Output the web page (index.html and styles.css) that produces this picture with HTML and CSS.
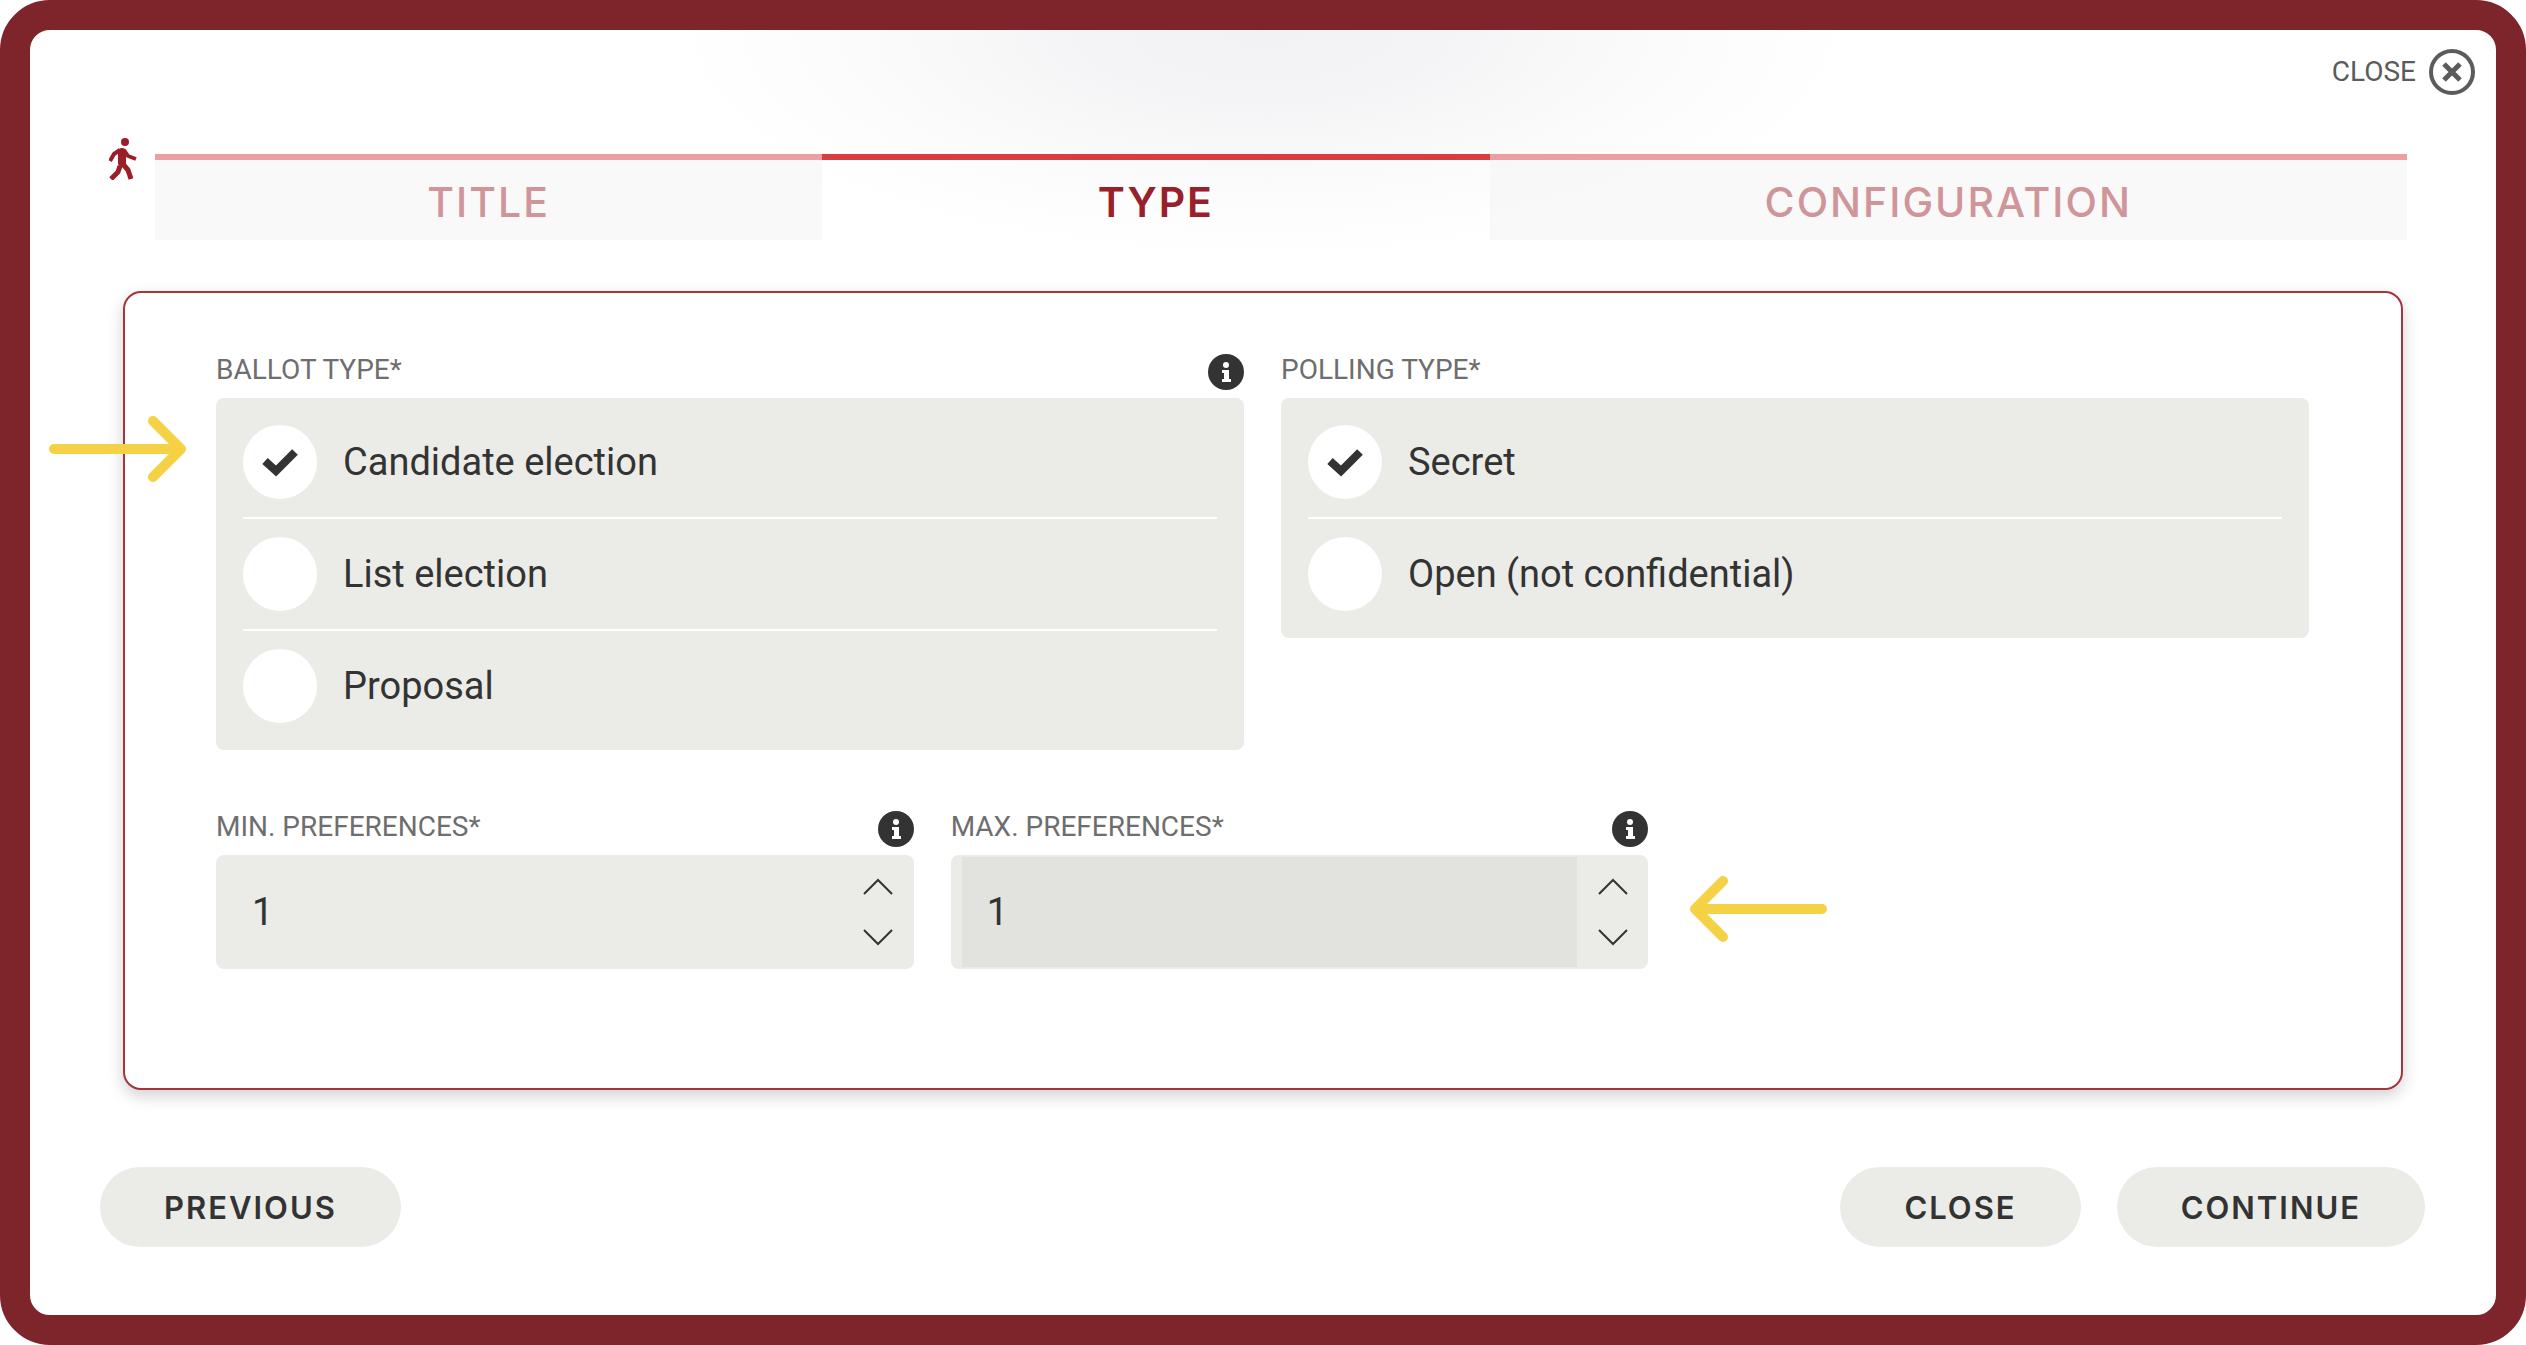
FILE: index.html
```html
<!DOCTYPE html>
<html lang="en">
<head>
<meta charset="utf-8">
<meta name="viewport" content="width=device-width, initial-scale=1">
<title>Ballot type</title>
<link rel="stylesheet" href="styles.css">
</head>
<body>
<svg class="sprite" aria-hidden="true">
  <symbol id="info" viewBox="0 0 36 36">
    <circle cx="18" cy="18" r="18" fill="#333"/>
    <circle cx="18" cy="11" r="3" fill="#fff"/>
    <path d="M14 16h7v9h2v3h-9v-3h2v-6h-2z" fill="#fff"/>
  </symbol>
  <symbol id="check" viewBox="0 0 38 30">
    <path d="M4 14l11 10L34 5" fill="none" stroke="#333" stroke-width="8"/>
  </symbol>
  <symbol id="up" viewBox="0 0 30 17">
    <path d="M1 16L15 2l14 14" fill="none" stroke="#333" stroke-width="2"/>
  </symbol>
  <symbol id="down" viewBox="0 0 30 17">
    <path d="M1 1l14 14L29 1" fill="none" stroke="#333" stroke-width="2"/>
  </symbol>
</svg>

<main class="dialog">
  <header class="topbar">
    <button class="dismiss" type="button">CLOSE
      <svg class="dismiss-icon" viewBox="0 0 46 46" aria-hidden="true">
        <circle cx="23" cy="23" r="21" fill="none" stroke="#5a5c5b" stroke-width="4"/>
        <path d="M15 15l16 16M31 15L15 31" stroke="#5a5c5b" stroke-width="5"/>
      </svg>
    </button>
  </header>

  <nav class="steps" aria-label="Steps">
    <svg class="walker" viewBox="0 0 28 42" aria-hidden="true">
      <circle cx="16" cy="4" r="4" fill="#9a1f28"/>
      <g fill="none" stroke="#9a1f28" stroke-linejoin="round">
        <path d="M13 14v11" stroke-width="8" stroke-linecap="round"/>
        <path d="M11 12l-6 4-4 7" stroke-width="4"/>
        <path d="M15 12l4 6 8 3" stroke-width="4"/>
        <path d="M13 25l6 7 3 9" stroke-width="5"/>
        <path d="M11 28l-2 6-7 7" stroke-width="5"/>
      </g>
    </svg>
    <div class="tabs" role="tablist">
      <button class="tab" type="button" role="tab" aria-selected="false">TITLE</button>
      <button class="tab tab-active" type="button" role="tab" aria-selected="true">TYPE</button>
      <button class="tab" type="button" role="tab" aria-selected="false">CONFIGURATION</button>
    </div>
  </nav>

  <form class="form" id="type-form">
    <div class="choices">
      <section class="group" role="radiogroup" aria-labelledby="ballot-label">
        <svg class="pointer pointer-over" viewBox="0 0 144 114" aria-hidden="true">
          <path d="M9 57h127M108 29l28 28-28 28"/>
        </svg>
        <div class="head">
          <span class="caption" id="ballot-label">BALLOT TYPE*</span>
          <button class="info" type="button" aria-label="About ballot type"><svg><use href="#info"/></svg></button>
        </div>
        <div class="options">
          <label class="option">
            <span class="mark"><input type="radio" name="ballot" checked><svg><use href="#check"/></svg></span>
            Candidate election
          </label>
          <label class="option">
            <span class="mark"><input type="radio" name="ballot"><svg><use href="#check"/></svg></span>
            List election
          </label>
          <label class="option">
            <span class="mark"><input type="radio" name="ballot"><svg><use href="#check"/></svg></span>
            Proposal
          </label>
        </div>
      </section>

      <section class="group" role="radiogroup" aria-labelledby="polling-label">
        <div class="head">
          <span class="caption" id="polling-label">POLLING TYPE*</span>
        </div>
        <div class="options">
          <label class="option">
            <span class="mark"><input type="radio" name="polling" checked><svg><use href="#check"/></svg></span>
            Secret
          </label>
          <label class="option">
            <span class="mark"><input type="radio" name="polling"><svg><use href="#check"/></svg></span>
            Open (not confidential)
          </label>
        </div>
      </section>
    </div>

    <div class="limits">
      <div class="limit">
        <div class="head">
          <label class="caption" for="min">MIN. PREFERENCES*</label>
          <button class="info" type="button" aria-label="About minimum preferences"><svg><use href="#info"/></svg></button>
        </div>
        <div class="stepper">
          <input id="min" type="number" value="1">
          <div class="arrows">
            <button type="button" aria-label="Increase minimum"><svg><use href="#up"/></svg></button>
            <button type="button" aria-label="Decrease minimum"><svg><use href="#down"/></svg></button>
          </div>
        </div>
      </div>
      <div class="limit">
        <div class="head">
          <label class="caption" for="max">MAX. PREFERENCES*</label>
          <button class="info" type="button" aria-label="About maximum preferences"><svg><use href="#info"/></svg></button>
        </div>
        <div class="stepper">
          <input id="max" class="current" type="number" value="1">
          <div class="arrows">
            <button type="button" aria-label="Increase maximum"><svg><use href="#up"/></svg></button>
            <button type="button" aria-label="Decrease maximum"><svg><use href="#down"/></svg></button>
          </div>
        </div>
      </div>
      <svg class="pointer" viewBox="0 0 144 114" aria-hidden="true">
        <path d="M137 54H10M38 26L10 54l28 28"/>
      </svg>
    </div>
  </form>

  <footer class="actions">
    <button class="pill" type="button">PREVIOUS</button>
    <button class="pill pill-end" type="button">CLOSE</button>
    <button class="pill" type="submit" form="type-form">CONTINUE</button>
  </footer>
</main>
</body>
</html>
```
FILE: styles.css
```css
* {
  box-sizing: border-box;
}

body {
  margin: 0;
  background: #fff;
  color: #333;
  font-family: Roboto, "Liberation Sans", sans-serif;
}

button {
  margin: 0;
  padding: 0;
  border: 0;
  background: none;
  color: inherit;
  font: inherit;
  cursor: pointer;
}

svg {
  display: block;
}

.sprite {
  position: absolute;
  width: 0;
  height: 0;
}

.dialog {
  display: flex;
  flex-direction: column;
  min-height: 100vh;
  border: 30px solid #7d252b;
  border-radius: 50px;
  background: radial-gradient(ellipse 24% 230px at 50% 0, #f2f2f5, #f4f4f6 30%, #f8f8f9 50%, #fcfcfd 75%, #fff) #fff;
}

.topbar {
  display: flex;
  justify-content: flex-end;
  padding: 19px 21px 0;
}

.dismiss {
  display: flex;
  align-items: center;
  gap: 13px;
  color: #5a5c5b;
  font-size: 28px;
  line-height: 46px;
}

.dismiss-icon {
  width: 46px;
  height: 46px;
}

.steps {
  display: flex;
  align-items: flex-start;
  gap: 18px;
  padding: 43px 89px 0 79px;
}

.walker {
  flex: none;
  width: 28px;
  height: 42px;
}

.tabs {
  flex: 1;
  display: grid;
  grid-template-columns: 8fr 8fr 11fr;
  margin-top: 16px;
}

.tab {
  padding: 18px 0 14px;
  border-top: 6px solid #ec9fa0;
  background: rgba(245, 245, 245, 0.6);
  color: #cf9599;
  font-family: Inter, "Liberation Sans", sans-serif;
  font-size: 41px;
  font-weight: 500;
  line-height: 48px;
  letter-spacing: 2px;
}

.tab-active {
  border-color: #d83e3f;
  background: none;
  color: #97202a;
  font-weight: 600;
}

.form {
  flex: 1;
  display: flex;
  flex-direction: column;
  gap: 61px;
  margin: 51px 93px 0;
  padding: 61px 92px 64px 91px;
  border: 2px solid #a5353c;
  border-radius: 18px;
  background: #fff;
  box-shadow: 0 6px 16px rgba(0, 0, 0, 0.18);
}

.choices {
  display: grid;
  grid-template-columns: 1fr 1fr;
  align-items: start;
  gap: 37px;
}

.group {
  position: relative;
}

.head {
  display: flex;
  justify-content: space-between;
  align-items: flex-start;
  height: 44px;
}

.caption {
  color: #6e6e6e;
  font-size: 28px;
  line-height: 32px;
}

.info svg {
  width: 36px;
  height: 36px;
}

.options {
  padding: 27px;
  border-radius: 8px;
  background: #ebece7;
}

.option {
  display: flex;
  align-items: center;
  gap: 26px;
  font-size: 38px;
  line-height: 44px;
}

.option + .option {
  margin-top: 18px;
  padding-top: 18px;
  border-top: 2px solid #fff;
}

.mark {
  display: grid;
  place-items: center;
}

.mark input,
.mark svg {
  grid-area: 1 / 1;
}

.mark input {
  appearance: none;
  width: 74px;
  height: 74px;
  margin: 0;
  border-radius: 50%;
  background: #fff;
}

.mark svg {
  display: none;
  width: 38px;
  height: 30px;
  pointer-events: none;
}

.mark input:checked + svg {
  display: block;
}

.limits {
  display: flex;
  align-items: flex-end;
  gap: 37px;
}

.limit {
  width: 33.333%;
}

.stepper {
  display: flex;
  height: 114px;
  padding: 2px 0 2px 11px;
  border-radius: 8px;
  background: #ebece7;
}

.stepper input {
  flex: 1;
  min-width: 0;
  padding: 0 25px;
  border: 0;
  background: none;
  color: #333;
  font: 38px/44px Roboto, "Liberation Sans", sans-serif;
  appearance: textfield;
}

.stepper input::-webkit-inner-spin-button {
  display: none;
}

.stepper .current {
  background: #e2e3de;
}

.arrows {
  display: flex;
  flex-direction: column;
  padding: 4px 0;
  width: 71px;
}

.arrows button {
  flex: 1;
  display: grid;
  place-items: center;
}

.arrows svg {
  width: 30px;
  height: 17px;
}

.pointer {
  flex: none;
  width: 144px;
  height: 114px;
  fill: none;
  stroke: #f5d146;
  stroke-width: 10px;
  stroke-linecap: round;
  stroke-linejoin: round;
}

.pointer-over {
  position: absolute;
  top: 38px;
  left: -171px;
}

.actions {
  display: flex;
  align-items: center;
  gap: 36px;
  padding: 77px 71px 68px 70px;
}

.pill {
  height: 80px;
  padding: 0 64px;
  border-radius: 40px;
  background: #ebece7;
  font-family: Inter, "Liberation Sans", sans-serif;
  font-size: 31px;
  font-weight: 600;
  letter-spacing: 2px;
}

.pill-end {
  margin-left: auto;
}
```
